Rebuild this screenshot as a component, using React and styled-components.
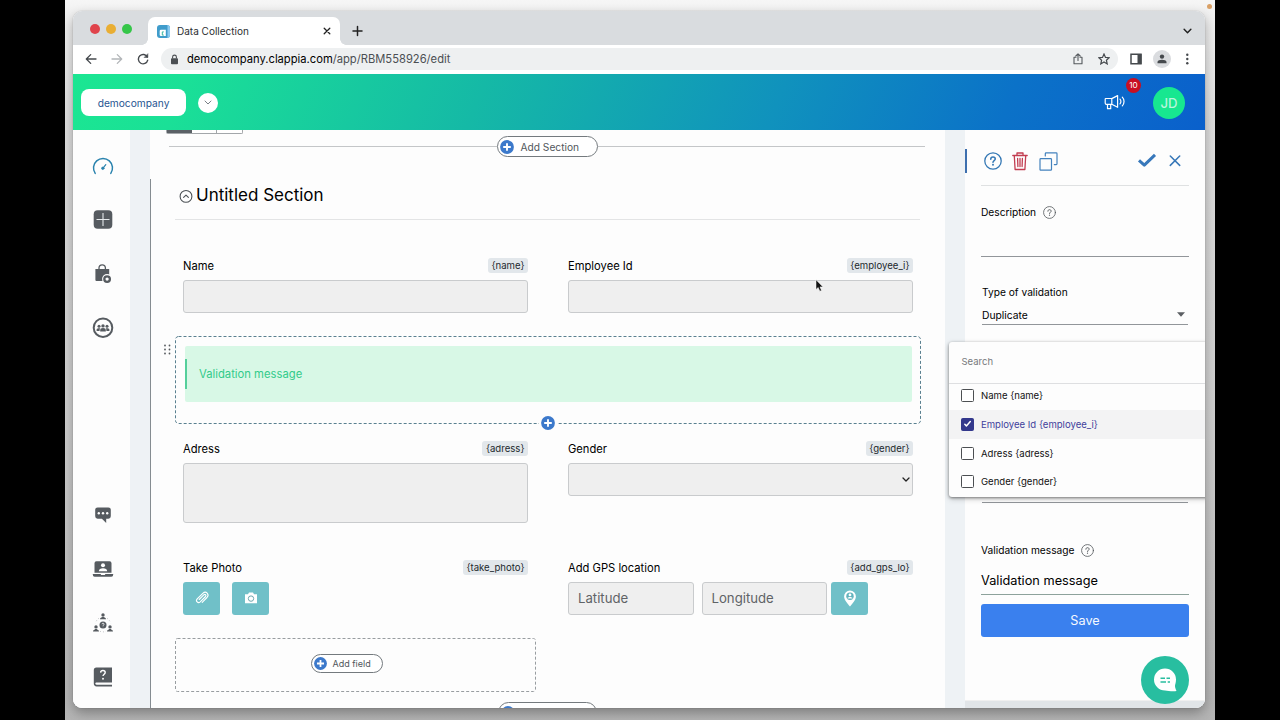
import React from "react";
import styled, { createGlobalStyle } from "styled-components";

const GlobalStyle = createGlobalStyle`
  *, *::before, *::after { box-sizing: border-box; }
  body { margin: 0; background: #000; overflow: hidden; }
  body, input, button { font-family: Inter, "Liberation Sans", sans-serif; }
  svg { display: block; flex: none; }
`;

const Stage = styled.div`
  width: 1280px;
  height: 720px;
  padding: 0 65px;
  background: #000;
  overflow: hidden;
`;
const Desktop = styled.div`
  position: relative;
  height: 720px;
  padding: 11px 10px 12px 8px;
  overflow: hidden;
  background: linear-gradient(180deg, #f6f6f6 0, #f1f1f1 12px, #dedede 120px, #cdcdcd 420px, #b4b4b4 100%);
`;
const RecordDot = styled.span`
  position: absolute;
  top: 4px;
  right: 3px;
  width: 5px;
  height: 5px;
  border-radius: 50%;
  background: #d9a066;
`;
const Window = styled.main`
  position: relative;
  display: flex;
  flex-direction: column;
  height: 697px;
  border-radius: 9px;
  overflow: hidden;
  background: #fff;
`;
const WindowShadow = styled.div`
  border-radius: 9px;
  box-shadow: 0 5px 12px rgba(0, 0, 0, 0.3), 0 0 1px rgba(0, 0, 0, 0.4);
`;

/* browser chrome */
const TabBar = styled.div`
  display: flex;
  align-items: flex-end;
  height: 34px;
  padding-left: 17px;
  padding-right: 13px;
  background: #d9dcdf;
`;
const Lights = styled.div`
  display: flex;
  gap: 6px;
  height: 28px;
  padding-top: 7px;
  width: 58px;
`;
const Light = styled.span`
  width: 10px;
  height: 10px;
  border-radius: 50%;
  background: ${(p) => p.$color};
`;
const Tab = styled.div`
  position: relative;
  display: flex;
  align-items: center;
  width: 192px;
  height: 28px;
  padding: 0 9px 0 9px;
  border-radius: 7px 7px 0 0;
  background: #fff;
  color: #2c2f32;
  font-size: 10px;
  &::before, &::after {
    content: "";
    position: absolute;
    bottom: 0;
    width: 6px;
    height: 6px;
  }
  &::before { left: -6px; background: radial-gradient(circle at 0 0, transparent 5.5px, #fff 6px); }
  &::after { right: -6px; background: radial-gradient(circle at 100% 0, transparent 5.5px, #fff 6px); }
`;
const TabTitle = styled.span`
  flex: 1;
  margin-left: 7px;
`;
const NewTab = styled.div`
  display: flex;
  align-items: center;
  flex: 1;
  height: 28px;
  padding-left: 11px;
`;
const TabMenu = styled.div`
  display: flex;
  align-items: center;
  height: 28px;
`;
const Toolbar = styled.div`
  display: flex;
  align-items: center;
  height: 29px;
  padding: 0 13px 1px 12px;
  background: #fff;
`;
const NavIcons = styled.div`
  display: flex;
  align-items: center;
  gap: 14px;
  width: 76px;
`;
const AddressBar = styled.div`
  display: flex;
  align-items: center;
  flex: 1;
  height: 22px;
  padding: 0 8px 0 9px;
  border-radius: 11px;
  background: #eef0f1;
  font-size: 11.2px;
  color: #4b4f53;
`;
const Url = styled.span`
  flex: 1;
  margin-left: 8px;
  b { font-weight: 400; color: #000; }
`;
const BarTools = styled.div`
  display: flex;
  align-items: center;
  gap: ${(p) => p.$gap}px;
  margin-left: ${(p) => p.$left || 0}px;
`;
const Avatar = styled.span`
  display: flex;
  align-items: center;
  justify-content: center;
  width: 18px;
  height: 18px;
  border-radius: 50%;
  background: #dadcdf;
`;

/* application header */
const Header = styled.header`
  display: flex;
  align-items: center;
  height: 56px;
  padding: 1px 20px 0 8px;
  background: linear-gradient(112deg, #1be692 0%, #1ae097 10%, #15b9a6 36%, #1092bd 62%, #0b72c8 82%, #0a60cc 100%);
`;
const Workspace = styled.div`
  width: 105px;
  height: 27px;
  border-radius: 8px;
  background: #fff;
  color: #1f5390;
  font-size: 10.2px;
  line-height: 28px;
  text-align: center;
`;
const RoundToggle = styled.span`
  display: flex;
  align-items: center;
  justify-content: center;
  width: 20px;
  height: 20px;
  margin-left: 12px;
  border-radius: 50%;
  background: #fff;
`;
const HeaderSpacer = styled.div` flex: 1; `;
const Bell = styled.div`
  position: relative;
  margin-right: 27px;
  margin-top: -2px;
`;
const Badge = styled.span`
  position: absolute;
  left: 22px;
  top: -16px;
  width: 15px;
  height: 15px;
  border-radius: 50%;
  background: #c80f22;
  color: #fff;
  font-size: 8.2px;
  line-height: 15px;
  text-align: center;
`;
const UserBadge = styled.div`
  width: 32px;
  height: 32px;
  margin-top: 1px;
  border-radius: 50%;
  background: #17e790;
  color: #b9f5dc;
  font-size: 13.2px;
  font-weight: 500;
  line-height: 33px;
  text-align: center;
`;

/* body */
const Body = styled.div`
  display: flex;
  height: 578px;
  background: #eef2f5;
`;
const Sidebar = styled.nav`
  display: flex;
  flex-direction: column;
  width: 57px;
  padding: 9px 0 4px 3px;
  background: #fdfdfd;
`;
const SideItem = styled.div`
  display: flex;
  align-items: center;
  justify-content: center;
  height: 54px;
  margin-top: ${(p) => (p.$push ? "auto" : 0)};
`;
const Form = styled.section`
  width: 795px;
  margin-left: 20px;
  overflow: hidden;
  background: #fdfdfd;
`;
const Segments = styled.div`
  display: flex;
  width: 77px;
  height: 4px;
  margin-left: 16px;
  border: 1px solid #a3a7aa;
  border-top: 0;
  border-radius: 0 0 2px 2px;
`;
const Segment = styled.span`
  flex: 1;
  background: ${(p) => (p.$on ? "#5b6166" : "#fff")};
  border-right: ${(p) => (p.$edge ? "1px solid #a3a7aa" : 0)};
`;
const AddRow = styled.div`
  display: flex;
  align-items: center;
  height: 20px;
  margin: 2.5px 20px 0 19px;
`;
const Rule = styled.span`
  height: 1px;
  flex: 1;
  background: #c4c6c8;
`;
const Pill = styled.div`
  display: flex;
  align-items: center;
  gap: ${(p) => (p.$small ? 6 : 7)}px;
  width: ${(p) => (p.$small ? 72 : p.$width || 101)}px;
  height: ${(p) => (p.$small ? 19 : 21)}px;
  padding-left: 2px;
  border: 1px solid #747a7e;
  border-radius: 11px;
  background: #fff;
  color: #50565b;
  font-size: ${(p) => (p.$small ? 9 : 10.2)}px;
  white-space: nowrap;
`;
const SectionBody = styled.div`
  height: 530px;
  margin-top: 22.5px;
  border-left: 1.5px solid #858c91;
  padding: 0 25px 0 24px;
`;
const SectionTitle = styled.h2`
  display: flex;
  align-items: center;
  gap: 3px;
  height: 41px;
  margin: 0;
  padding: 0 0 7px 4px;
  border-bottom: 1px solid #e3e4e5;
  color: #000;
  font-size: 17px;
  font-weight: 400;
  line-height: 31px;
`;
const FieldRow = styled.div`
  display: grid;
  grid-template-columns: 345px 345px;
  column-gap: 40px;
  height: ${(p) => p.$height}px;
  margin-top: ${(p) => p.$top}px;
  margin-left: 8px;
`;
const FieldHead = styled.div`
  display: flex;
  align-items: center;
  justify-content: space-between;
  height: 15px;
  margin-bottom: 7px;
`;
const FieldLabel = styled.label`
  padding-top: 1px;
  color: #000;
  font-size: 11.2px;
  line-height: 15px;
`;
const VarTag = styled.code`
  height: 15px;
  padding: 0 3.5px;
  border-radius: 3px;
  background: #e2e7eb;
  color: #23292d;
  font-family: inherit;
  font-size: 9.6px;
  line-height: 15px;
`;
const Box = styled.div`
  display: flex;
  align-items: center;
  justify-content: ${(p) => (p.$end ? "flex-end" : "flex-start")};
  width: ${(p) => p.$width || 345}px;
  height: ${(p) => p.$height || 32.5}px;
  padding: 0 ${(p) => (p.$end ? 2 : 9)}px;
  border: 1px solid #c9cbcd;
  border-radius: 3px;
  background: #efefef;
  color: #5f6366;
  font-size: 13.2px;
`;
const Inline = styled.div`
  display: flex;
  gap: ${(p) => p.$gap}px;
`;
const TealButton = styled.div`
  display: flex;
  align-items: center;
  justify-content: center;
  width: 37px;
  height: 32.5px;
  margin-left: ${(p) => p.$left || 0}px;
  border-radius: 3px;
  background: #70c0c8;
`;
const DashRect = styled.rect`
  fill: none;
  stroke: ${(p) => p.$stroke};
  stroke-width: 1;
  stroke-dasharray: 3 2;
`;
const Frame = styled.div`
  position: relative;
  width: 746px;
  height: 88px;
  margin-top: 24px;
  padding: 10px 9px 0 9.5px;
`;
const FrameLine = styled.svg`
  position: absolute;
  inset: 0;
`;
const Grip = styled.span`
  position: absolute;
  left: -12.5px;
  top: 8px;
`;
const FrameAdd = styled.span`
  position: absolute;
  left: 364px;
  bottom: -8px;
  padding: 2px;
  background: #fdfdfd;
`;
const Message = styled.div`
  display: flex;
  align-items: center;
  height: 56px;
  border-radius: 2px;
  background: #d8f8e6;
`;
const MessageText = styled.p`
  margin: 0;
  height: 30px;
  padding-left: 12.5px;
  border-left: 2px solid #55cf9b;
  color: #32cb8a;
  font-size: 11.25px;
  line-height: 31px;
`;
const AddFieldFrame = styled.div`
  position: relative;
  display: flex;
  align-items: center;
  justify-content: center;
  width: 361px;
  height: 54px;
  margin-top: 24px;
  padding-bottom: 3px;
  padding-right: 18px;
`;
const NextSection = styled.div`
  margin: 10px 0 0 323px;
`;

/* settings panel */
const Panel = styled.aside`
  width: 240px;
  height: 571px;
  margin-left: 20px;
  padding: 16px 16px 0;
  background: #fdfdfd;
  box-shadow: inset 0 -1px 0 #f0f0f0, 0 8px 0 #e1e5e8;
`;
const PanelTools = styled.div`
  display: flex;
  align-items: center;
  height: 40px;
  margin-bottom: 18px;
  padding: 0 8px 9px 3px;
  border-bottom: 1px solid #dfe1e2;
`;
const ActiveMark = styled.span`
  width: 2px;
  height: 24px;
  margin-left: -19px;
  margin-right: 17px;
  background: #3d6fae;
`;
const ToolGap = styled.span` width: ${(p) => p.$w}px; `;
const PanelLabel = styled.div`
  display: flex;
  align-items: center;
  gap: 7px;
  height: 16px;
  margin-top: ${(p) => p.$top || 0}px;
  padding-left: ${(p) => p.$left || 0}px;
  color: #000;
  font-size: 10.2px;
  line-height: 15px;
  white-space: nowrap;
`;
const HelpMark = styled.span`
  margin-top: 1px;
`;
const Line = styled.div`
  display: flex;
  align-items: center;
  justify-content: space-between;
  height: ${(p) => p.$height}px;
  margin-top: ${(p) => p.$top || 0}px;
  margin-left: ${(p) => p.$inset || 0}px;
  margin-right: ${(p) => p.$inset || 0}px;
  padding: 1px 3px 0 0;
  border-bottom: 1px solid ${(p) => p.$color || "#92969a"};
  color: #000;
  font-size: ${(p) => p.$size || 10.3}px;
`;
const SaveButton = styled.div`
  height: 32.5px;
  margin-top: 9px;
  border-radius: 3px;
  background: #3a80ee;
  color: #f4f8ff;
  font-size: 12.7px;
  line-height: 33px;
  text-align: center;
`;
const Menu = styled.div`
  position: absolute;
  left: 876px;
  top: 331px;
  width: 262px;
  height: 155px;
  border-radius: 3px;
  background: #fdfdfd;
  box-shadow: 0 1px 3px rgba(0, 0, 0, 0.45), 0 2px 6px rgba(0, 0, 0, 0.18);
`;
const MenuSearch = styled.div`
  height: 42px;
  padding-left: 12.5px;
  border-bottom: 1px solid #dedfe1;
  color: #77797c;
  font-size: 9.5px;
  line-height: 40px;
`;
const MenuItem = styled.div`
  display: flex;
  align-items: center;
  gap: 7px;
  height: 28.8px;
  padding-left: 12px;
  margin-top: ${(p) => (p.$first ? -2.8 : 0)}px;
  background: ${(p) => (p.$on ? "#f3f3f4" : "transparent")};
  color: ${(p) => (p.$on ? "#41419c" : "#111")};
  font-size: 9.55px;
`;
const Check = styled.span`
  display: flex;
  align-items: center;
  justify-content: center;
  width: 13px;
  height: 13px;
  border: 1.4px solid ${(p) => (p.$on ? "#33388c" : "#4c4f52")};
  border-radius: 1.5px;
  background: ${(p) => (p.$on ? "#33388c" : "#fff")};
`;
const ChatButton = styled.div`
  position: absolute;
  left: 1068px;
  top: 645px;
  display: flex;
  align-items: center;
  justify-content: center;
  width: 48px;
  height: 48px;
  border-radius: 50%;
  background: #28bea0;
`;
const Pointer = styled.span`
  position: absolute;
  left: 742px;
  top: 268px;
`;

const Stroke = ({ w = 16, h = w, vb, color = "#333", sw = 1.5, children }) => (
  <svg width={w} height={h} viewBox={vb || `0 0 ${w} ${h}`} fill="none" stroke={color} strokeWidth={sw} strokeLinecap="round" strokeLinejoin="round">
    {children}
  </svg>
);
const Chevron = ({ w, h, color, sw }) => (
  <Stroke w={w} h={h} vb="0 0 8 5" color={color} sw={sw}><path d="M1 1 4 4 7 1" /></Stroke>
);
const PlusDot = ({ size = 14 }) => (
  <svg width={size} height={size} viewBox="0 0 14 14">
    <circle cx="7" cy="7" r="6.9" fill="#3c79cb" />
    <path d="M7 3.2v7.6M3.2 7h7.6" stroke="#fff" strokeWidth="1.9" />
  </svg>
);
const Help = ({ size, color, sw = 1 }) => (
  <Stroke w={size} vb="0 0 16 16" color={color} sw={sw}>
    <circle cx="8" cy="8" r="7.3" />
    <path d="M6 6.4c0-1.2.9-1.9 2-1.9s2 .7 2 1.8c0 1.3-2 1.5-2 2.9" strokeWidth={sw * 1.2} />
    <path d="M8 11.3v.1" strokeWidth={sw * 1.5} />
  </Stroke>
);

const Gauge = () => (
  <Stroke w={22} h={20} color="#2a83ae" sw={1.5}>
    <path d="M3.2 17.4A9.5 9.5 0 1 1 18.8 17.4" />
    <path d="m13.8 8.7-2.8 3.4" strokeWidth="1.2" />
    <circle cx="10.8" cy="12.3" r="1.2" fill="#2a83ae" strokeWidth=".8" />
  </Stroke>
);
const PlusSquare = () => (
  <svg width="20" height="20" viewBox="0 0 20 20">
    <rect x=".7" y=".2" width="18.6" height="18.6" rx="4" fill="#565b60" />
    <path d="M10 3v13M3.5 9.5h13" stroke="#e6eaec" strokeWidth="1.1" />
  </svg>
);
const BagGear = () => (
  <svg width="18" height="20" viewBox="0 0 18 20">
    <path d="M5 5.5V4.1a3 3 0 0 1 6.4 0V5.5" fill="none" stroke="#565b60" strokeWidth="1.3" />
    <path d="M1.4 5.1h13.8v12H2.4a1 1 0 0 1-1-1z" fill="#565b60" />
    <circle cx="13.1" cy="15.1" r="5" fill="#fdfdfd" />
    <circle cx="13.1" cy="15.1" r="2.8" fill="none" stroke="#565b60" strokeWidth="2.3" />
  </svg>
);
const Team = () => (
  <svg width="22" height="22" viewBox="0 0 22 22" fill="#565b60">
    <circle cx="11" cy="10.7" r="9.3" fill="none" stroke="#565b60" strokeWidth="2" />
    <circle cx="7" cy="9.2" r="1.5" /><circle cx="11" cy="8.9" r="1.7" /><circle cx="15" cy="9.2" r="1.5" />
    <path d="M4.6 14v-1.3c0-1 .9-1.5 2.4-1.5.6 0 1 .1 1.3.3-.6.5-.7 1-.7 2.5zM17.4 14v-1.3c0-1-.9-1.5-2.4-1.5-.6 0-1 .1-1.3.3.6.5.7 1 .7 2.5zM8.2 14.6v-1.5c0-1.3 1-2 2.8-2s2.8.7 2.8 2v1.5z" />
  </svg>
);
const Comment = () => (
  <svg width="18" height="18" viewBox="0 0 18 18">
    <path d="M3.6 1.5h10.8A2.4 2.4 0 0 1 16.8 4v6.3a2.4 2.4 0 0 1-2.4 2.4h-2.2v4.2L7.9 12.7H3.6a2.4 2.4 0 0 1-2.4-2.4V4a2.4 2.4 0 0 1 2.4-2.5z" fill="#565b60" />
    <g fill="#fff"><circle cx="4.8" cy="7.3" r="1.2" /><circle cx="9" cy="7.3" r="1.2" /><circle cx="13.2" cy="7.3" r="1.2" /></g>
  </svg>
);
const LaptopUser = () => (
  <svg width="22" height="18" viewBox="0 0 22 18">
    <path d="M4.4 1.3h13.2a1.9 1.9 0 0 1 1.9 1.9v9.5h-17V3.2a1.9 1.9 0 0 1 1.9-1.9z" fill="#565b60" />
    <circle cx="11" cy="5.2" r="2" fill="#fff" />
    <path d="M6.8 11.2c0-2 1.7-3 4.2-3s4.2 1 4.2 3z" fill="#fff" />
    <path d="M.8 14.1h7.8l.6.9h3.6l.6-.9h7.8v.7a1.9 1.9 0 0 1-1.9 1.9H2.7a1.9 1.9 0 0 1-1.9-1.9z" fill="#565b60" />
  </svg>
);
const Network = () => (
  <svg width="22" height="22" viewBox="0 0 22 22" fill="#565b60">
    <circle cx="11" cy="13" r="3.5" />
    <path d="M10 12.2c0-1.4 2.1-1.3 2.1 0 0 .8-1.1.8-1.1 1.7m0 .8v.4" fill="none" stroke="#fff" strokeWidth=".8" />
    <circle cx="11" cy="2.9" r="1.7" /><path d="M8 7.2c0-1.6 1.7-1.2 2-2.4h2c.3 1.2 2 .8 2 2.4z" />
    <circle cx="4" cy="14.9" r="1.7" /><path d="M1 19.5c0-1.6 1.7-1.2 2-2.4h2c.3 1.2 2 .8 2 2.4z" />
    <circle cx="18" cy="14.9" r="1.7" /><path d="M15 19.5c0-1.6 1.7-1.2 2-2.4h2c.3 1.2 2 .8 2 2.4z" />
    <path d="M7 6.2a8 8 0 0 0-3.5 5M15 6.2a8 8 0 0 1 3.5 5M8 19.3a8 8 0 0 0 6 0" fill="none" stroke="#a3a8ac" strokeWidth=".7" strokeDasharray="1 2" />
  </svg>
);
const HelpBook = () => (
  <svg width="20" height="20" viewBox="0 0 20 20">
    <path d="M3.4.6H19v14.8H3.6c-.8 0-1.3.4-1.3 1.1s.5 1.2 1.3 1.2H19v1.7H3.6A2.8 2.8 0 0 1 .8 16.600V3.2A2.6 2.6 0 0 1 3.4.6z" fill="#565b60" />
    <path d="M7.6 5.6c.1-1.4 1-2.1 2.3-2.1 1.4 0 2.3.8 2.3 2 0 1.7-2.2 1.8-2.2 3.6" fill="none" stroke="#fff" strokeWidth="1.4" />
    <circle cx="10" cy="11.7" r=".95" fill="#fff" />
  </svg>
);

const sideIcons = [Gauge, PlusSquare, BagGear, Team, Comment, LaptopUser, Network, HelpBook];

const Field = ({ label, tag, children }) => (
  <div>
    <FieldHead><FieldLabel>{label}</FieldLabel><VarTag>{tag}</VarTag></FieldHead>
    {children}
  </div>
);

const options = [
  { label: "Name {name}" },
  { label: "Employee Id {employee_i}", on: true },
  { label: "Adress {adress}" },
  { label: "Gender {gender}" },
];

const Chrome = () => (
  <>
    <TabBar>
      <Lights><Light $color="#e0444c" /><Light $color="#e9ae33" /><Light $color="#35c649" /></Lights>
      <Tab>
        <svg width="13" height="13" viewBox="0 0 13 13">
          <rect width="13" height="13" rx="3" fill="#3f9ccb" />
          <path d="M10.5 0a3 3 0 0 1 2.5 3v7a3 3 0 0 1-2.5 3z" fill="#8ccaf0" />
          <path d="M8.8 4.7H4A1.3 1.3 0 0 0 2.7 6v3.7A1.3 1.3 0 0 0 4 11h4.8z" fill="#fff" />
          <path d="M6.8 6.9H5.3v3.2h1.5" fill="none" stroke="#35b7a0" strokeWidth="1" />
        </svg>
        <TabTitle>Data Collection</TabTitle>
        <Stroke w={8} color="#222" sw={1.3}><path d="m1.2 1.2 5.6 5.6M6.8 1.2 1.2 6.8" /></Stroke>
      </Tab>
      <NewTab><Stroke w={12} color="#222" sw={1.5}><path d="M6.5 1.5v9M2 6h9" /></Stroke></NewTab>
      <TabMenu><Chevron w={9} h={6} color="#222" sw={1.3} /></TabMenu>
    </TabBar>
    <Toolbar>
      <NavIcons>
        <Stroke w={12} color="#45494d" sw={1.3}><path d="M11 6H1.5M5.7 1.6 1.3 6l4.4 4.4" /></Stroke>
        <Stroke w={12} color="#b3b6b9" sw={1.3}><path d="M1 6h9.5M6.3 1.6 10.7 6l-4.4 4.4" /></Stroke>
        <Stroke w={12} color="#45494d" sw={1.4}><path d="M10.3 4A4.7 4.7 0 1 0 10.7 7.2" /><path d="M10.9 1v3.5H7.4z" fill="#45494d" strokeWidth=".5" /></Stroke>
      </NavIcons>
      <AddressBar>
        <svg width="9" height="11" viewBox="0 0 9 11">
          <rect x="1" y="4.2" width="7" height="6" rx=".9" fill="#4b4f53" />
          <path d="M2.6 4.5V3a1.9 1.9 0 0 1 3.8 0v1.5" fill="none" stroke="#4b4f53" strokeWidth="1.1" />
        </svg>
        <Url><b>democompany.clappia.com</b>/app/RBM558926/edit</Url>
        <BarTools $gap={14}>
          <Stroke w={12} color="#55595d" sw={1.1}><path d="M4 4.3H2v6.5h8V4.3H8M6 7.5V1M3.8 3 6 .9 8.2 3" /></Stroke>
          <Stroke w={12} color="#45494d" sw={1.2}><path d="m6 1 1.5 3.4 3.7.3-2.8 2.5.8 3.7L6 9l-3.2 1.9.8-3.7L.8 4.7l3.7-.3z" strokeLinejoin="miter" /></Stroke>
        </BarTools>
      </AddressBar>
      <BarTools $gap={11} $left={12}>
        <svg width="12" height="12" viewBox="0 0 12 12"><path d="M1 1.2h10v9.6H1z" fill="none" stroke="#45494d" strokeWidth="1.5" /><path d="M7.5 1h4v10h-4z" fill="#45494d" /></svg>
        <Avatar><svg width="10" height="10" viewBox="0 0 10 10" fill="#45494d"><circle cx="5" cy="2.6" r="2.2" /><path d="M.5 9.3V8c0-1.5 2.3-2.3 4.5-2.3S9.5 6.5 9.5 8v1.3z" /></svg></Avatar>
        <svg width="10" height="12" viewBox="0 0 10 12" fill="#45494d"><circle cx="5.3" cy="1.8" r="1.2" /><circle cx="5.3" cy="6" r="1.2" /><circle cx="5.3" cy="10.2" r="1.2" /></svg>
      </BarTools>
    </Toolbar>
  </>
);

const FormArea = () => (
  <Form>
    <Segments><Segment $on /><Segment $edge /><Segment /></Segments>
    <AddRow>
      <Rule />
      <Pill><PlusDot />Add Section</Pill>
      <Rule />
    </AddRow>
    <SectionBody>
      <SectionTitle>
        <Stroke w={14} color="#4d5256" sw={1.1}><circle cx="7" cy="7.4" r="5.9" /><path d="M4.6 8.4 7 6.1 9.4 8.4" /></Stroke>
        <span>Untitled Section</span>
      </SectionTitle>
      <FieldRow $top={38} $height={54}>
        <Field label="Name" tag="{name}"><Box /></Field>
        <Field label="Employee Id" tag="{employee_i}"><Box /></Field>
      </FieldRow>
      <Frame>
        <FrameLine width="746" height="88"><DashRect x=".5" y=".5" width="745" height="87" rx="3" $stroke="#5a8090" /></FrameLine>
        <Grip>
          <svg width="9" height="11" viewBox="0 0 9 11" fill="#55595d">
            {[1.5, 5.5, 9.5].map((y) => <React.Fragment key={y}><circle cx="2" cy={y} r=".9" /><circle cx="6.5" cy={y} r=".9" /></React.Fragment>)}
          </svg>
        </Grip>
        <Message><MessageText>Validation message</MessageText></Message>
        <FrameAdd><PlusDot /></FrameAdd>
      </Frame>
      <FieldRow $top={17} $height={82}>
        <Field label="Adress" tag="{adress}"><Box $height={60} /></Field>
        <Field label="Gender" tag="{gender}"><Box $end><Chevron w={8} h={5} color="#222" sw={1.3} /></Box></Field>
      </FieldRow>
      <FieldRow $top={37} $height={54}>
        <Field label="Take Photo" tag="{take_photo}">
          <Inline $gap={12}>
            <TealButton>
              <Stroke w={16} color="#fff" sw={1.1}><path d="m5.2 9.5 4.6-4.6c1.3-1.2 2.9.3 1.7 1.6L6.2 11.8c-2.2 2-5-.7-3-2.9l5.6-5.6c3.2-2.900 7 .9 4.2 4.2l-4.800 4.800" /></Stroke>
            </TealButton>
            <TealButton>
              <svg width="14" height="12" viewBox="0 0 14 12"><path d="M1 2.2h3L5 .6h4l1 1.6h3v9H1z" fill="#fff" /><circle cx="7" cy="6.6" r="2.7" fill="none" stroke="#70a9b0" strokeWidth="1" /></svg>
            </TealButton>
          </Inline>
        </Field>
        <Field label="Add GPS location" tag="{add_gps_lo}">
          <Inline $gap={8}>
            <Box $width={125.5}>Latitude</Box>
            <Box $width={125.5}>Longitude</Box>
            <TealButton $left={-4}>
              <svg width="14" height="17" viewBox="0 0 14 17"><path d="M7 .5a5.9 5.9 0 0 1 5.9 5.9C12.9 10 9.3 13.5 7 16.5 4.7 13.5 1.1 10 1.1 6.4A5.9 5.9 0 0 1 7 .5z" fill="#fff" /><circle cx="7" cy="6.3" r="3.7" fill="#62b3bc" /><circle cx="7" cy="4.9" r="1.4" fill="#fff" /><path d="M4.4 8.6c.2-2 5-2 5.2 0z" fill="#fff" /></svg>
            </TealButton>
          </Inline>
        </Field>
      </FieldRow>
      <AddFieldFrame>
        <FrameLine width="361" height="54"><DashRect x=".5" y=".5" width="360" height="53" rx="2" $stroke="#989da0" /></FrameLine>
        <Pill $small><PlusDot size={13} />Add field</Pill>
      </AddFieldFrame>
      <NextSection><Pill $width={99}><PlusDot /></Pill></NextSection>
    </SectionBody>
  </Form>
);

const Settings = () => (
  <Panel>
    <PanelTools>
      <ActiveMark />
      <Help size={18} color="#3679b5" sw={1.15} />
      <ToolGap $w={10} />
      <Stroke w={16} h={19} color="#c23c50" sw={1.3}>
        <path d="M.8 3.5h14.4M5 3.3V1h6v2.3M2.3 3.8l.8 13.7h9.8l.8-13.7M5.6 6.5l.3 8M8 6.5v8M10.4 6.5l-.3 8" />
      </Stroke>
      <ToolGap $w={11} />
      <Stroke w={19} h={19} color="#4482bd" sw={1.2}>
        <rect x="1" y="6.7" width="11.5" height="11.5" rx=".8" />
        <path d="M6.3 3.9V1.7a.8.8 0 0 1 .8-.8h10.1a.8.8 0 0 1 .8.8v10.1a.8.8 0 0 1-.8.8h-1.9" />
      </Stroke>
      <HeaderSpacer />
      <Stroke w={20} h={16} color="#3878bb" sw={3}><path d="m2 7.4 5.3 4.8L18 1.9" strokeLinecap="butt" /></Stroke>
      <ToolGap $w={12} />
      <Stroke w={12} color="#3878b8" sw={1.5}><path d="m1.3 1 9.4 9.4M10.7 1 1.3 10.4" /></Stroke>
    </PanelTools>
    <PanelLabel>Description<HelpMark><Help size={13} color="#555a5e" /></HelpMark></PanelLabel>
    <Line $height={37} />
    <PanelLabel $top={27} $left={1}>Type of validation</PanelLabel>
    <Line $height={21} $top={4} $inset={1}>
      Duplicate
      <svg width="8" height="5" viewBox="0 0 8 5"><path d="M0 .3h8L4 4.7z" fill="#5b5f63" /></svg>
    </Line>
    <Line $height={20} $top={158} $inset={1} />
    <PanelLabel $top={39}>Validation message<HelpMark><Help size={13} color="#555a5e" /></HelpMark></PanelLabel>
    <Line $height={30} $top={7} $size={12.75} $color="#8da29b">Validation message</Line>
    <SaveButton>Save</SaveButton>
  </Panel>
);

export default function App() {
  return (
    <Stage>
      <GlobalStyle />
      <Desktop>
        <RecordDot />
        <WindowShadow>
          <Window>
            <Chrome />
            <Header>
              <Workspace>democompany</Workspace>
              <RoundToggle><Chevron w={8} h={5} color="#788086" sw={1} /></RoundToggle>
              <HeaderSpacer />
              <Bell>
                <Stroke w={22} h={16} color="#fff" sw={1.2}>
                  <path d="M1.5 4.5h6.3v5.8H2.5a1.3 1.3 0 0 1-1.3-1.3V4.8M7.8 4.6l5.8-3v11.7l-5.8-3M3.5 10.4v4.3h3.2v-4.2M16 5.2c1.2 1.2 1.2 3.5 0 4.7M18.3 3.2c2.3 2.3 2.3 6.4 0 8.7" />
                </Stroke>
                <Badge>10</Badge>
              </Bell>
              <UserBadge>JD</UserBadge>
            </Header>
            <Body>
              <Sidebar>
                {sideIcons.map((Icon, i) => <SideItem key={i} $push={i === 4}><Icon /></SideItem>)}
              </Sidebar>
              <FormArea />
              <Settings />
            </Body>
            <Menu>
              <MenuSearch>Search</MenuSearch>
              {options.map((o, i) => (
                <MenuItem key={o.label} $on={o.on} $first={i === 0}>
                  <Check $on={o.on}>
                    {o.on && <Stroke w={9} h={8} color="#fff" sw={1.5}><path d="m1.8 4.3 1.6 1.6L7.3 1.5" /></Stroke>}
                  </Check>
                  {o.label}
                </MenuItem>
              ))}
            </Menu>
            <ChatButton>
              <svg width="26" height="26" viewBox="0 0 26 26">
                <path d="M13 1.5a11 11 0 0 1 11 11c0 3-.8 4.6-1 6.3-.1 1.500.8 3.500 1.500 5.200-2.500.7-8 .3-11.500-.5a11 11 0 0 1 0-22z" fill="#fff" />
                <path d="M8.500 11.200h4.500M14.500 11.200H18M8.500 15H14M15.700 15H18" stroke="#28bea0" strokeWidth="1.4" />
              </svg>
            </ChatButton>
            <Pointer>
              <svg width="9" height="13" viewBox="0 0 9 13"><path d="M1 .8v9.7l2.2-2 1.6 3.7 1.7-.8L5 7.9h3z" fill="#111" stroke="#fff" strokeWidth=".5" /></svg>
            </Pointer>
          </Window>
        </WindowShadow>
      </Desktop>
    </Stage>
  );
}
